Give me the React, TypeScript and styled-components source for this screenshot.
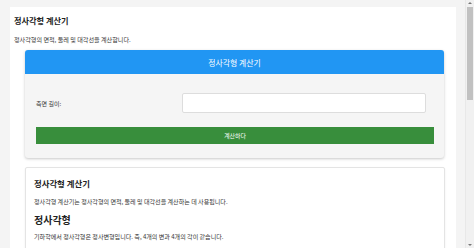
import React from "react";
import styled, { createGlobalStyle } from "styled-components";

const GlobalStyle = createGlobalStyle`
  body {
    margin: 0;
    background: #f4f4f4;
    font-family: "Noto Sans CJK KR", "Noto Sans", sans-serif;
    color: #333;
  }
`;

const Page = styled.div`
  margin: 7px 18px 0 10px;
  background: #fff;
  padding: 7px 4px 0 4px;
  min-height: 640px;
  box-sizing: border-box;
`;

const Title = styled.h1`
  margin: 0;
  font-size: 8.2px;
  line-height: 13px;
  font-weight: 700;
  color: #222;
`;

const Subtitle = styled.p`
  margin: 8px 0 0 0;
  font-size: 6.1px;
  line-height: 9px;
  color: #333;
`;

const Card = styled.section`
  width: 419px;
  margin: 6px 0 0 11px;
  background: #f5f5f5;
  border-radius: 3px;
  box-shadow: 0 1px 3px rgba(0, 0, 0, 0.22);
`;

const CardHeader = styled.div`
  height: 24px;
  background: #2196f3;
  border-radius: 3px 3px 0 0;
  color: #fff;
  font-size: 7.9px;
  display: flex;
  align-items: center;
  justify-content: center;
`;

const CardBody = styled.div`
  padding: 19px 10px 14px 11px;
`;

const FormRow = styled.div`
  display: grid;
  grid-template-columns: 146px 244px;
  align-items: center;
`;

const Label = styled.label`
  font-size: 6px;
  color: #333;
`;

const Input = styled.input`
  height: 20px;
  box-sizing: border-box;
  border: 1px solid #ddd;
  border-radius: 2px;
  background: #fff;
  outline: none;
`;

const Button = styled.button`
  display: block;
  width: 100%;
  height: 17px;
  margin-top: 14px;
  border: none;
  border-radius: 0;
  background: #388e3c;
  color: #fff;
  font-family: inherit;
  font-size: 5.9px;
  padding: 0;
`;

const InfoCard = styled.section`
  width: 420px;
  margin: 9px 0 0 11px;
  background: #fff;
  border: 1px solid #e4e4e4;
  border-radius: 2px;
  box-shadow: 0 1px 2px rgba(0, 0, 0, 0.08);
  padding: 8px 11px 10px 8px;
  box-sizing: border-box;
`;

const InfoTitle = styled.h2`
  margin: 0;
  font-size: 8.4px;
  line-height: 14px;
  font-weight: 700;
  color: #222;
`;

const InfoHeading = styled.h3`
  margin: 7px 0 0 0;
  font-size: 10px;
  line-height: 14px;
  font-weight: 700;
  color: #222;
`;

const InfoText = styled.p<{ $gap: number }>`
  margin: ${(p) => p.$gap}px 0 0 0;
  font-size: 6.05px;
  line-height: 9px;
  color: #333;
`;

const ScrollTrack = styled.div`
  position: fixed;
  top: 0;
  right: 0;
  width: 9px;
  height: 100vh;
  background: #f1f1f1;
  border-left: 1px solid #e8e8e8;
  box-sizing: border-box;
  display: flex;
  flex-direction: column;
  align-items: center;
`;

const ScrollArrow = styled.div<{ $down?: boolean }>`
  width: 0;
  height: 0;
  margin: 2px 0;
  border-left: 2px solid transparent;
  border-right: 2px solid transparent;
  ${(p) =>
    p.$down
      ? "border-top: 2px solid #777; margin-top: auto;"
      : "border-bottom: 2px solid #777;"}
`;

const ScrollThumb = styled.div`
  width: 6px;
  height: 93px;
  margin-top: 1px;
  background: #c1c1c1;
`;

export default function App() {
  return (
    <>
      <GlobalStyle />
      <Page>
        <Title>정사각형 계산기</Title>
        <Subtitle>정사각형의 면적, 둘레 및 대각선을 계산합니다.</Subtitle>
        <Card>
          <CardHeader>정사각형 계산기</CardHeader>
          <CardBody>
            <FormRow>
              <Label htmlFor="side">측면 길이:</Label>
              <Input id="side" type="text" />
            </FormRow>
            <Button>계산하다</Button>
          </CardBody>
        </Card>
        <InfoCard>
          <InfoTitle>정사각형 계산기</InfoTitle>
          <InfoText $gap={7}>
            정사각형 계산기는 정사각형의 면적, 둘레 및 대각선을 계산하는 데 사용됩니다.
          </InfoText>
          <InfoHeading>정사각형</InfoHeading>
          <InfoText $gap={5}>
            기하학에서 정사각형은 정사변형입니다. 즉, 4개의 변과 4개의 각이 같습니다.
          </InfoText>
        </InfoCard>
      </Page>
      <ScrollTrack aria-hidden="true">
        <ScrollArrow />
        <ScrollThumb />
        <ScrollArrow $down />
      </ScrollTrack>
    </>
  );
}
